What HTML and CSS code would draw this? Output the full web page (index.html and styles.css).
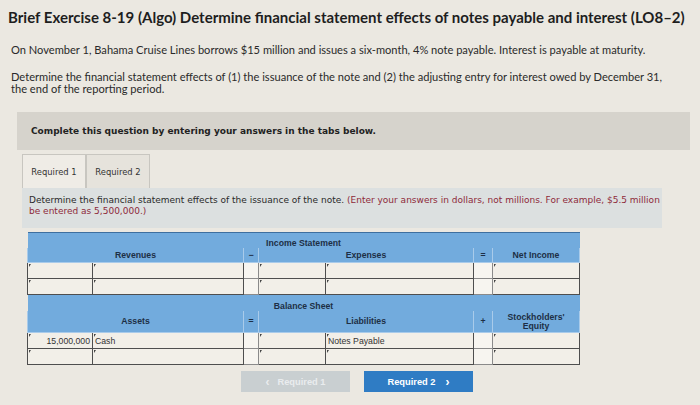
FILE: index.html
```html
<!DOCTYPE html>
<html>
<head>
<meta charset="utf-8">
<link rel="stylesheet" href="styles.css">
</head>
<body>
<h1 class="title">Brief Exercise 8-19 (Algo) Determine financial statement effects of notes payable and interest (LO8–2)</h1>
<p class="intro">On November 1, Bahama Cruise Lines borrows $15 million and issues a six-month, 4% note payable. Interest is payable at maturity.</p>
<p class="task">Determine the financial statement effects of (1) the issuance of the note and (2) the adjusting entry for interest owed by December 31, the end of the reporting period.</p>
<div class="notice">Complete this question by entering your answers in the tabs below.</div>
<div class="tabs">
  <div class="tab active">Required 1</div>
  <div class="tab">Required 2</div>
</div>
<div class="panel">
  <p class="instr">Determine the financial statement effects of the issuance of the note. <span class="red">(Enter your answers in dollars, not millions. For example, $5.5 million</span><br><span class="red">be entered as 5,500,000.)</span></p>
</div>
<table class="fs">
  <colgroup>
    <col class="c1"><col class="c2"><col class="c3"><col class="c4"><col class="c5"><col class="c6"><col class="c7">
  </colgroup>
  <tr class="band"><td colspan="7">Income Statement</td></tr>
  <tr class="head"><td colspan="2">Revenues</td><td class="op">−</td><td colspan="2">Expenses</td><td class="op">=</td><td>Net Income</td></tr>
  <tr class="row"><td class="in"></td><td class="in"></td><td class="op"></td><td class="in"></td><td class="in"></td><td class="op"></td><td class="in"></td></tr>
  <tr class="row"><td class="in"></td><td class="in"></td><td class="op"></td><td class="in"></td><td class="in"></td><td class="op"></td><td class="in"></td></tr>
  <tr class="band tall"><td colspan="7">Balance Sheet</td></tr>
  <tr class="head big"><td colspan="2">Assets</td><td class="op">=</td><td colspan="2">Liabilities</td><td class="op">+</td><td>Stockholders'<br>Equity</td></tr>
  <tr class="row"><td class="in num">15,000,000</td><td class="in">Cash</td><td class="op"></td><td class="in"></td><td class="in">Notes Payable</td><td class="op"></td><td class="in"></td></tr>
  <tr class="row"><td class="in"></td><td class="in"></td><td class="op"></td><td class="in"></td><td class="in"></td><td class="op"></td><td class="in"></td></tr>
</table>
<div class="nav">
  <div class="btn prev"><span class="chev">‹</span>Required 1</div>
  <div class="btn next">Required 2<span class="chev after">›</span></div>
</div>
</body>
</html>
```

FILE: styles.css
```css
html, body {
  margin: 0;
  padding: 0;
}
body {
  background: #ebe8e1;
  width: 700px;
  height: 405px;
  overflow: hidden;
  color: #222;
}
.title {
  font-family: "Lato", "Open Sans", sans-serif;
  font-weight: 700;
  font-size: 15px;
  margin: 0;
  padding: 8px 0 0 8px;
  line-height: 18px;
  color: #1e1e1e;
}
.intro, .task {
  font-family: "Lato", "Open Sans", sans-serif;
  font-size: 11.1px;
  line-height: 12px;
  margin: 0;
  padding-left: 11px;
  color: #2a2a2a;
}
.intro {
  margin-top: 18px;
}
.task {
  margin-top: 15px;
  width: 662px;
}
.notice {
  margin: 17px 10px 0 17px;
  height: 38px;
  background: #d6d3cc;
  font-family: "DejaVu Sans", sans-serif;
  font-weight: 700;
  font-size: 9px;
  line-height: 38px;
  padding-left: 14px;
  color: #222;
}
.tabs {
  display: flex;
  margin: 4px 0 0 22px;
  height: 34px;
}
.tab {
  font-family: "DejaVu Sans", sans-serif;
  font-size: 8.4px;
  color: #333;
  border: 1px solid #c8c6c0;
  border-bottom: none;
  width: 64px;
  box-sizing: border-box;
  display: flex;
  align-items: center;
  justify-content: center;
  background: #e6e3dc;
}
.tab.active {
  background: #efece6;
}
.panel {
  margin: 0 38px 0 22px;
  background: #dce0e0;
  height: 40px;
  padding: 7px 0 0 7px;
  box-sizing: border-box;
}
.instr {
  margin: 0;
  width: 640px;
  font-family: "DejaVu Sans", sans-serif;
  font-size: 9px;
  line-height: 11px;
  color: #2a2a2a;
}
.red {
  color: #8e2a3a;
}
.fs {
  border-collapse: collapse;
  margin: 4px 0 0 27px;
  table-layout: fixed;
  width: 552px;
  font-family: "Liberation Sans", Arial, sans-serif;
  font-size: 8.7px;
}
.c1 { width: 65px; }
.c2 { width: 151px; }
.c3 { width: 15px; }
.c4 { width: 67px; }
.c5 { width: 148px; }
.c6 { width: 19px; }
.c7 { width: 87px; }
.fs td {
  padding: 0;
}
.band td {
  background: #72abdd;
  height: 15px;
  text-align: center;
  vertical-align: bottom;
  font-weight: 700;
  color: #1d2f45;
  border-top: 1px solid #3e6f9f;
  line-height: 10px;
}
.band.tall td {
  height: 16px;
}
.head td {
  background: #72abdd;
  height: 14px;
  text-align: center;
  font-weight: 700;
  color: #1d2f45;
  border: 1px solid #a9cbea;
  border-top: none;
  line-height: 9px;
}
.head.big td {
  height: 21px;
}
.row td {
  height: 15px;
  background: #f2efe8;
  border: 1px solid #4e4e4e;
  position: relative;
  color: #333;
  vertical-align: middle;
  line-height: 10px;
}
.row td.op {
  background: #f7f5f0;
  border-color: #8a8a8a;
}
.row td.in::before {
  content: "";
  position: absolute;
  left: 1px;
  top: 1px;
  width: 0;
  height: 0;
  border-top: 3px solid #444;
  border-right: 2px solid transparent;
}
.row td.num {
  text-align: right;
  padding-right: 2px;
}
.row td.in:not(.num) {
  padding-left: 2px;
}
.nav {
  display: flex;
  gap: 14px;
  margin: 6px 0 0 241px;
}
.btn {
  width: 109px;
  height: 21px;
  display: flex;
  align-items: center;
  justify-content: center;
  font-family: "Liberation Sans", Arial, sans-serif;
  font-weight: 700;
  font-size: 9.3px;
  color: #fff;
}
.chev {
  font-size: 12px;
  line-height: 10px;
  margin-right: 8px;
}
.chev.after {
  margin-right: 0;
  margin-left: 10px;
}
.btn.prev {
  background: #c9cfd1;
  color: #e9ecee;
}
.btn.next {
  background: #2f7cc4;
}
```
